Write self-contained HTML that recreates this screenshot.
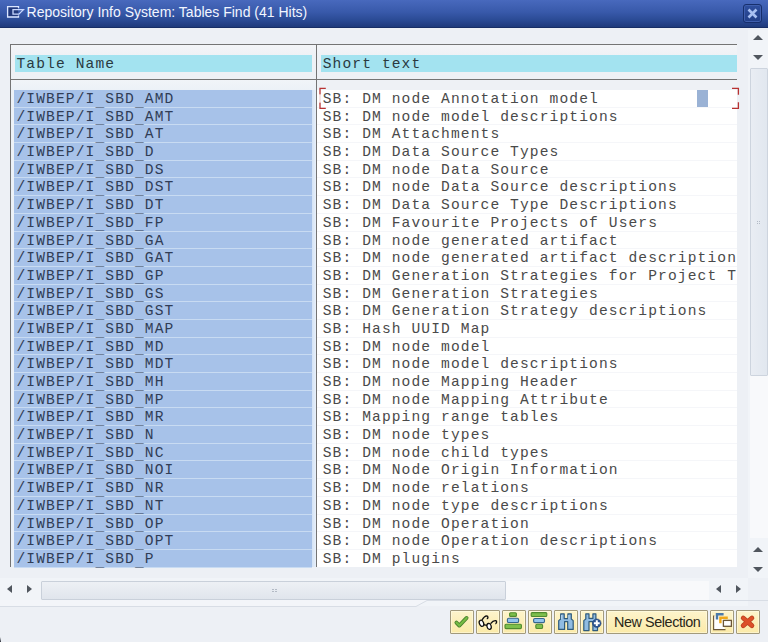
<!DOCTYPE html>
<html><head><meta charset="utf-8">
<style>
*{margin:0;padding:0;box-sizing:border-box}
html,body{width:768px;height:642px;overflow:hidden;background:#edf0f5;font-family:"Liberation Sans",sans-serif;position:relative}
.abs{position:absolute}
#title{position:absolute;left:0;top:0;width:768px;height:28px;background:linear-gradient(#4869bd,#3859aa 45%,#2a4a94 75%,#1f3a7c);border-bottom:1px solid #172e66}
#title .t{position:absolute;left:26.6px;top:4px;color:#f2f6ff;font-size:14px;white-space:nowrap}
.hl{position:absolute;background:#747474}
.mono{font-family:"Liberation Mono",monospace;font-size:14.6px;letter-spacing:1.107px;line-height:18px;white-space:nowrap;position:absolute}
.hdr{position:absolute;top:55px;height:17px;background:#a3e3f0}
.lc{position:absolute;left:14px;width:298px;height:17.69px;background:#a7c2e9;border-bottom:1px solid #c8dbf2}
.rc{position:absolute;left:317px;width:420px;height:16.69px;background:#fff}
.lt,.rt{font-family:"Liberation Mono",monospace;font-size:14.6px;letter-spacing:1.107px;line-height:18px;white-space:nowrap;position:absolute;overflow:hidden}
.lt{left:16.5px;width:295px;height:20px;color:#303d56}
.rt{left:322.7px;width:414px;color:#4a4a4a}
.btn{position:absolute;top:610px;width:24px;height:24px;background:linear-gradient(#fdf4cc,#fbeaa8);border:1px solid #a29a7c;border-radius:1px;box-shadow:inset 0 0 0 1px rgba(255,255,240,.45)}
.btn svg{position:absolute;left:-1px;top:-1px}
.arr{position:absolute;width:0;height:0;border-style:solid}
.lt u{text-decoration:none;position:relative;top:2.6px}

</style></head><body>
<div id="title">
 <svg class="abs" style="left:0;top:0" width="28" height="24" viewBox="0 0 28 24"><rect x="8.2" y="7.2" width="9.8" height="9.2" fill="#22397c"/><path d="M18.5 8.2V6.6H7.6V17H18.5V15.4" fill="none" stroke="#dbe6ff" stroke-width="1.3"/><path d="M13 9.7H23.4L18.9 14.2H13Z" fill="none" stroke="#c8d8ff" stroke-width="1.3"/></svg>
 <div class="t">Repository Info System: Tables Find (41 Hits)</div>
 <div class="abs" style="left:743px;top:4px;width:19px;height:19px;background:linear-gradient(#2f4f9e,#223f88);border:1px solid #172f6c;box-shadow:inset 0 0 0 1px #3f5fae;border-radius:3px"></div>
 <svg class="abs" style="left:747px;top:8px" width="11" height="11" viewBox="0 0 11 11"><path d="M1.5 1.5L9.5 9.5M9.5 1.5L1.5 9.5" stroke="#a9c0f2" stroke-width="2.6"/></svg>
</div>
<div class="abs" style="left:11px;top:80px;width:305px;height:487px;background:linear-gradient(#f1f4f8,#ecf1f7 10px)"></div>
<div class="abs" style="left:312px;top:90px;width:4px;height:477px;background:linear-gradient(90deg,#d4e3f5,#e8f0fa)"></div>
<div class="abs" style="left:317px;top:80px;width:420px;height:10px;background:#eef1f5"></div>
<div class="abs" style="left:317px;top:90px;width:420px;height:477px;background:#f5f6f9"></div>
<div class="abs" style="left:11px;top:45px;width:726px;height:34px;background:linear-gradient(#f3f5f8,#eef1f5 30%)"></div>
<div class="hl" style="left:10px;top:44px;width:727px;height:1px"></div>
<div class="hl" style="left:10px;top:79px;width:727px;height:1px"></div>
<div class="hl" style="left:10px;top:44px;width:1px;height:523px"></div>
<div class="hl" style="left:316px;top:44px;width:1px;height:523px"></div>
<div class="hdr" style="left:15px;width:297px"></div>
<div class="hdr" style="left:321px;width:416px"></div>
<div class="mono" style="left:16.5px;top:55.2px;color:#2a3a40">Table Name</div>
<div class="mono" style="left:322.7px;top:55.2px;color:#2a3a40">Short text</div>
<div class="lc" style="top:90.00px"></div><div class="lt" style="top:90.00px">/IWBEP/I<u>_</u>SBD<u>_</u>AMD</div>
<div class="lc" style="top:107.69px"></div><div class="lt" style="top:107.69px">/IWBEP/I<u>_</u>SBD<u>_</u>AMT</div>
<div class="lc" style="top:125.38px"></div><div class="lt" style="top:125.38px">/IWBEP/I<u>_</u>SBD<u>_</u>AT</div>
<div class="lc" style="top:143.07px"></div><div class="lt" style="top:143.07px">/IWBEP/I<u>_</u>SBD<u>_</u>D</div>
<div class="lc" style="top:160.76px"></div><div class="lt" style="top:160.76px">/IWBEP/I<u>_</u>SBD<u>_</u>DS</div>
<div class="lc" style="top:178.45px"></div><div class="lt" style="top:178.45px">/IWBEP/I<u>_</u>SBD<u>_</u>DST</div>
<div class="lc" style="top:196.14px"></div><div class="lt" style="top:196.14px">/IWBEP/I<u>_</u>SBD<u>_</u>DT</div>
<div class="lc" style="top:213.83px"></div><div class="lt" style="top:213.83px">/IWBEP/I<u>_</u>SBD<u>_</u>FP</div>
<div class="lc" style="top:231.52px"></div><div class="lt" style="top:231.52px">/IWBEP/I<u>_</u>SBD<u>_</u>GA</div>
<div class="lc" style="top:249.21px"></div><div class="lt" style="top:249.21px">/IWBEP/I<u>_</u>SBD<u>_</u>GAT</div>
<div class="lc" style="top:266.90px"></div><div class="lt" style="top:266.90px">/IWBEP/I<u>_</u>SBD<u>_</u>GP</div>
<div class="lc" style="top:284.59px"></div><div class="lt" style="top:284.59px">/IWBEP/I<u>_</u>SBD<u>_</u>GS</div>
<div class="lc" style="top:302.28px"></div><div class="lt" style="top:302.28px">/IWBEP/I<u>_</u>SBD<u>_</u>GST</div>
<div class="lc" style="top:319.97px"></div><div class="lt" style="top:319.97px">/IWBEP/I<u>_</u>SBD<u>_</u>MAP</div>
<div class="lc" style="top:337.66px"></div><div class="lt" style="top:337.66px">/IWBEP/I<u>_</u>SBD<u>_</u>MD</div>
<div class="lc" style="top:355.35px"></div><div class="lt" style="top:355.35px">/IWBEP/I<u>_</u>SBD<u>_</u>MDT</div>
<div class="lc" style="top:373.04px"></div><div class="lt" style="top:373.04px">/IWBEP/I<u>_</u>SBD<u>_</u>MH</div>
<div class="lc" style="top:390.73px"></div><div class="lt" style="top:390.73px">/IWBEP/I<u>_</u>SBD<u>_</u>MP</div>
<div class="lc" style="top:408.42px"></div><div class="lt" style="top:408.42px">/IWBEP/I<u>_</u>SBD<u>_</u>MR</div>
<div class="lc" style="top:426.11px"></div><div class="lt" style="top:426.11px">/IWBEP/I<u>_</u>SBD<u>_</u>N</div>
<div class="lc" style="top:443.80px"></div><div class="lt" style="top:443.80px">/IWBEP/I<u>_</u>SBD<u>_</u>NC</div>
<div class="lc" style="top:461.49px"></div><div class="lt" style="top:461.49px">/IWBEP/I<u>_</u>SBD<u>_</u>NOI</div>
<div class="lc" style="top:479.18px"></div><div class="lt" style="top:479.18px">/IWBEP/I<u>_</u>SBD<u>_</u>NR</div>
<div class="lc" style="top:496.87px"></div><div class="lt" style="top:496.87px">/IWBEP/I<u>_</u>SBD<u>_</u>NT</div>
<div class="lc" style="top:514.56px"></div><div class="lt" style="top:514.56px">/IWBEP/I<u>_</u>SBD<u>_</u>OP</div>
<div class="lc" style="top:532.25px"></div><div class="lt" style="top:532.25px">/IWBEP/I<u>_</u>SBD<u>_</u>OPT</div>
<div class="lc" style="top:549.94px"></div><div class="lt" style="top:549.94px">/IWBEP/I<u>_</u>SBD<u>_</u>P</div>
<div class="rc" style="top:90.00px"></div><div class="rt" style="top:90.00px">SB: DM node Annotation model</div>
<div class="rc" style="top:107.69px"></div><div class="rt" style="top:107.69px">SB: DM node model descriptions</div>
<div class="rc" style="top:125.38px"></div><div class="rt" style="top:125.38px">SB: DM Attachments</div>
<div class="rc" style="top:143.07px"></div><div class="rt" style="top:143.07px">SB: DM Data Source Types</div>
<div class="rc" style="top:160.76px"></div><div class="rt" style="top:160.76px">SB: DM node Data Source</div>
<div class="rc" style="top:178.45px"></div><div class="rt" style="top:178.45px">SB: DM node Data Source descriptions</div>
<div class="rc" style="top:196.14px"></div><div class="rt" style="top:196.14px">SB: DM Data Source Type Descriptions</div>
<div class="rc" style="top:213.83px"></div><div class="rt" style="top:213.83px">SB: DM Favourite Projects of Users</div>
<div class="rc" style="top:231.52px"></div><div class="rt" style="top:231.52px">SB: DM node generated artifact</div>
<div class="rc" style="top:249.21px"></div><div class="rt" style="top:249.21px">SB: DM node generated artifact description</div>
<div class="rc" style="top:266.90px"></div><div class="rt" style="top:266.90px">SB: DM Generation Strategies for Project T</div>
<div class="rc" style="top:284.59px"></div><div class="rt" style="top:284.59px">SB: DM Generation Strategies</div>
<div class="rc" style="top:302.28px"></div><div class="rt" style="top:302.28px">SB: DM Generation Strategy descriptions</div>
<div class="rc" style="top:319.97px"></div><div class="rt" style="top:319.97px">SB: Hash UUID Map</div>
<div class="rc" style="top:337.66px"></div><div class="rt" style="top:337.66px">SB: DM node model</div>
<div class="rc" style="top:355.35px"></div><div class="rt" style="top:355.35px">SB: DM node model descriptions</div>
<div class="rc" style="top:373.04px"></div><div class="rt" style="top:373.04px">SB: DM node Mapping Header</div>
<div class="rc" style="top:390.73px"></div><div class="rt" style="top:390.73px">SB: DM node Mapping Attribute</div>
<div class="rc" style="top:408.42px"></div><div class="rt" style="top:408.42px">SB: Mapping range tables</div>
<div class="rc" style="top:426.11px"></div><div class="rt" style="top:426.11px">SB: DM node types</div>
<div class="rc" style="top:443.80px"></div><div class="rt" style="top:443.80px">SB: DM node child types</div>
<div class="rc" style="top:461.49px"></div><div class="rt" style="top:461.49px">SB: DM Node Origin Information</div>
<div class="rc" style="top:479.18px"></div><div class="rt" style="top:479.18px">SB: DM node relations</div>
<div class="rc" style="top:496.87px"></div><div class="rt" style="top:496.87px">SB: DM node type descriptions</div>
<div class="rc" style="top:514.56px"></div><div class="rt" style="top:514.56px">SB: DM node Operation</div>
<div class="rc" style="top:532.25px"></div><div class="rt" style="top:532.25px">SB: DM node Operation descriptions</div>
<div class="rc" style="top:549.94px"></div><div class="rt" style="top:549.94px">SB: DM plugins</div>
<!-- cursor and focus bracket -->
<div class="abs" style="left:697px;top:90px;width:11px;height:17px;background:#9ab2d5"></div>
<svg class="abs" style="left:316px;top:86px" width="426" height="26" viewBox="0 0 426 26"><path d="M9.8 2.4H4V8.6M4 16.6V22.4H9.8M416 2.4H422.4V8.8M422.4 16.3V22.4H416" fill="none" stroke="#b83232" stroke-width="1.3"/><path d="M4 8.6V16.6" stroke="#f0c8c8" stroke-width="1"/></svg>
<!-- vertical scrollbar -->
<div class="abs" style="left:748px;top:30px;width:20px;height:548px;background:#f1f4f8"></div>
<div class="abs" style="left:750px;top:68px;width:18px;height:470px;background:#f8f9fb"></div>
<div class="abs" style="left:750px;top:68px;width:18px;height:308px;background:linear-gradient(90deg,#e9edf3,#e1e7ef);border:1px solid #cdd4de;border-radius:1px"></div>
<div class="arr" style="left:753px;top:35px;border-width:0 5px 5px 5px;border-color:transparent transparent #50565e transparent"></div>
<div class="arr" style="left:753px;top:55px;border-width:5px 5px 0 5px;border-color:#50565e transparent transparent transparent"></div>
<div class="arr" style="left:753px;top:547px;border-width:0 5px 5px 5px;border-color:transparent transparent #50565e transparent"></div>
<div class="arr" style="left:753px;top:567px;border-width:5px 5px 0 5px;border-color:#50565e transparent transparent transparent"></div>
<svg class="abs" style="left:757px;top:221px" width="4" height="4" viewBox="0 0 4 4"><g fill="#b3bac5"><rect x="0" y="0" width="1" height="1"/><rect x="2" y="0" width="1" height="1"/><rect x="0" y="2" width="1" height="1"/><rect x="2" y="2" width="1" height="1"/></g></svg>
<!-- horizontal scrollbar -->
<div class="abs" style="left:0;top:578px;width:748px;height:28px;background:#f1f4f8"></div>
<div class="abs" style="left:41px;top:581px;width:668px;height:19px;background:#f8f9fb"></div>
<div class="abs" style="left:41px;top:581px;width:465px;height:19px;background:linear-gradient(#edf0f5,#e0e5ec);border:1px solid #c9d0da;border-radius:1px"></div>
<div class="arr" style="left:7px;top:585px;border-width:4.7px 5px 4.7px 0;border-color:transparent #50565e transparent transparent"></div>
<div class="arr" style="left:27px;top:585px;border-width:4.7px 0 4.7px 5px;border-color:transparent transparent transparent #50565e"></div>
<div class="arr" style="left:716px;top:585px;border-width:4.7px 5px 4.7px 0;border-color:transparent #50565e transparent transparent"></div>
<div class="arr" style="left:736px;top:585px;border-width:4.7px 0 4.7px 5px;border-color:transparent transparent transparent #50565e"></div>
<svg class="abs" style="left:272px;top:589px" width="5" height="4" viewBox="0 0 5 4"><g fill="#b3bac5"><rect x="0" y="0" width="2" height="1"/><rect x="3" y="0" width="2" height="1"/><rect x="0" y="2" width="2" height="1"/><rect x="3" y="2" width="2" height="1"/></g></svg>
<svg class="abs" style="left:0;top:596px" width="768" height="14" viewBox="0 0 768 14"><path d="M0 4H427L416 10H0Z" fill="#f3f5f9"/><path d="M0 10.5H416L427 4.5H768" fill="none" stroke="#d8dde5" stroke-width="1"/></svg>
<!-- toolbar -->
<div class="btn" style="left:450px"><svg width="24" height="24" viewBox="0 0 24 24"><path d="M6.4 12.6L9.3 15.6L16.6 7.9" fill="none" stroke="#467f2c" stroke-width="3.8" stroke-linecap="round" stroke-linejoin="round"/><path d="M6.4 12.6L9.3 15.6L16.6 7.9" fill="none" stroke="#76bc45" stroke-width="2.2" stroke-linecap="round" stroke-linejoin="round"/></svg></div>
<div class="btn" style="left:476px"><svg width="24" height="24" viewBox="0 0 24 24"><g fill="#fff" stroke="#111" stroke-width="1.3"><ellipse cx="5.5" cy="13.3" rx="2.1" ry="3.2" transform="rotate(-22 5.5 13.3)"/><ellipse cx="13.1" cy="16.4" rx="2.1" ry="3" transform="rotate(-15 13.1 16.4)"/></g><path d="M6 10C7.5 7.5 9 6 10.6 5.9C12.3 6 12.4 8.4 10.8 8.7M7.5 14.6L11 15.4M14.6 13.6C16.2 11.6 18.3 10.4 19.8 10.7C21 11.2 20.8 13.4 19.4 13.7" fill="none" stroke="#111" stroke-width="1.4"/></svg></div>
<div class="btn" style="left:502px"><svg width="24" height="24" viewBox="0 0 24 24"><g stroke-width="1.1"><rect x="7.6" y="2.8" width="6.8" height="3.6" rx="1" fill="#7ebf4c" stroke="#4f8a2f"/><rect x="5.4" y="8.2" width="11.2" height="4.3" rx="1.3" fill="#92c4ee" stroke="#35668f"/><rect x="3" y="14.3" width="16.4" height="4.3" rx="1" fill="#7ebf4c" stroke="#4f8a2f"/></g></svg></div>
<div class="btn" style="left:528px"><svg width="24" height="24" viewBox="0 0 24 24"><g stroke-width="1.1"><rect x="3.2" y="2.6" width="15.6" height="3.9" rx="1" fill="#7ebf4c" stroke="#4f8a2f"/><rect x="5.6" y="8.5" width="10.9" height="4.1" rx="1.3" fill="#92c4ee" stroke="#35668f"/><rect x="7.8" y="14.3" width="6.8" height="4.2" rx="1.3" fill="#7ebf4c" stroke="#4f8a2f"/></g></svg></div>
<div class="btn" style="left:554px"><svg width="24" height="24" viewBox="0 0 24 24"><path d="M6.7 3.8H10.2V8.6H13.9V3.8H17.3V9L19.2 10.6V19.4H13.7V11.6H10.6V19.4H4.7V10.6L6.7 9Z" fill="#8fbbe2" stroke="#2f5b7c" stroke-width="1.2" stroke-linejoin="round"/><path d="M7.6 5V9.4M14.8 5V9.4" stroke="#b6d4ee" stroke-width="1"/></svg></div>
<div class="btn" style="left:580px"><svg width="24" height="24" viewBox="0 0 24 24"><path d="M5.8 3.8H9V8.4H12.9V3.8H15.9V9L17.5 10.6V20.6H12.9V11.6H9V20.6H3.8V10.6L5.8 9Z" fill="#8fbbe2" stroke="#2f5b7c" stroke-width="1.2" stroke-linejoin="round"/><circle cx="16.8" cy="13.2" r="4.3" fill="#2d5590" stroke="#22427a" stroke-width="0.5"/><path d="M16.8 10.3V16.1M13.9 13.2H19.7" stroke="#fff" stroke-width="2"/></svg></div>
<div class="btn" style="left:606px;width:102px;font-size:14.4px;letter-spacing:-0.42px;line-height:22px;text-align:center;color:#2a2618;text-indent:0.4px">New Selection</div>
<div class="btn" style="left:710px"><svg width="24" height="24" viewBox="0 0 24 24"><path d="M3.7 5.5V19.6H15.5" fill="#fff" stroke="#6b5636" stroke-width="1.3"/><rect x="4.4" y="6.2" width="10" height="12.7" fill="#fff" opacity="0.85"/><path d="M7 9.6V4.2H13.6" fill="none" stroke="#4a7aaa" stroke-width="2.4"/><path d="M10.4 13.3V7.8H17.8" fill="none" stroke="#f0a818" stroke-width="2.4"/><rect x="13.4" y="10.4" width="8" height="5.9" fill="#fff" stroke="#6b5636" stroke-width="1.3"/></svg></div>
<div class="btn" style="left:736px"><svg width="24" height="24" viewBox="0 0 24 24"><path d="M7.2 8L15.9 15.6M15.9 8L7.2 15.6" stroke="#b8401f" stroke-width="4.8" stroke-linecap="round"/><path d="M7.2 8L15.9 15.6M15.9 8L7.2 15.6" stroke="#dc5029" stroke-width="3.4" stroke-linecap="round"/></svg></div>

<div class="abs blob" style="left:0;top:637px;width:1px;height:5px;background:linear-gradient(rgba(40,45,55,0),#2a2f38)"></div>

</body></html>
